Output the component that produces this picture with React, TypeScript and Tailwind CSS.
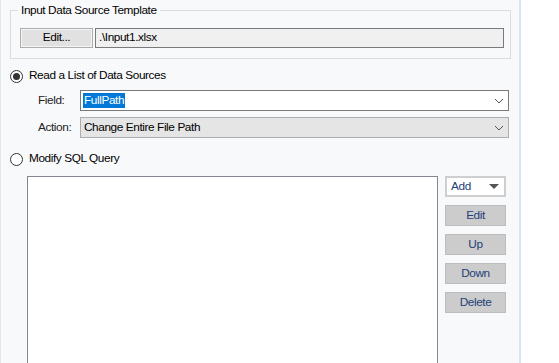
import React from "react";

const font = { fontFamily: '"Liberation Sans", Arial, sans-serif', letterSpacing: "-0.4px" };

function Radio({ checked, label }: { checked: boolean; label: string }) {
  return (
    <div className="flex items-center h-[14px]">
      <div className="w-[13px] h-[13px] rounded-full border border-[#333333] bg-white flex items-center justify-center">
        {checked && <div className="w-[7px] h-[7px] rounded-full bg-[#333333]" />}
      </div>
      <span className="ml-[6px] text-black leading-none">{label}</span>
    </div>
  );
}

function Chevron() {
  return (
    <svg width="10" height="6" viewBox="0 0 10 6" className="mr-[4px]">
      <path d="M1 1 L5 5 L9 1" fill="none" stroke="#555" strokeWidth="1" />
    </svg>
  );
}

function SideButton({ label }: { label: string }) {
  return (
    <div className="w-[61px] h-[21px] bg-[#cccccc] border border-[#bdbdbd] flex items-center justify-center text-[#1e3f78]">
      {label}
    </div>
  );
}

export default function App() {
  return (
    <div className="w-[559px] h-[363px] bg-white overflow-hidden flex text-[12px] [&_*]:text-[11.8px]" style={font}>
      <div className="w-[521px] h-full bg-[#f8f9fb] border-l border-[#e4e7ee] border-r-2 border-r-[#dce3f0] flex flex-col shrink-0">
        {/* Group box */}
        <div className="relative ml-[9px] mt-[10px] w-[501px] h-[49px] border border-[#dcdcdc]">
          <div className="absolute left-[7px] top-[-8px] px-[3px] bg-[#f8f9fb] leading-[14px] text-black">
            Input Data Source Template
          </div>
          <div className="flex mt-[17px] ml-[9px]">
            <div className="w-[73px] h-[20px] bg-[#e1e1e1] border border-[#adadad] flex items-center justify-center text-black shadow-[inset_0_0_0_1px_#f4f4f4]">
              Edit...
            </div>
            <div className="ml-[2px] w-[409px] h-[20px] bg-[#f0f0f0] border border-[#7a7a7a] flex items-center pl-[3px] text-black">
              .\Input1.xlsx
            </div>
          </div>
        </div>

        <div className="ml-[9px] mt-[10px]">
          <Radio checked label="Read a List of Data Sources" />
        </div>

        <div className="flex items-center mt-[7px] ml-[37px]">
          <span className="w-[42px] text-[#222]">Field:</span>
          <div className="w-[429px] h-[21px] bg-white border border-[#7a7a7a] flex items-center justify-between pl-[2px]">
            <span className="bg-[#0078d7] text-white leading-[15px] px-[1px]">FullPath</span>
            <Chevron />
          </div>
        </div>

        <div className="flex items-center mt-[6px] ml-[37px]">
          <span className="w-[42px] text-[#222]">Action:</span>
          <div className="w-[429px] h-[21px] bg-[#e5e5e5] border border-[#adadad] flex items-center justify-between pl-[3px]">
            <span className="text-black">Change Entire File Path</span>
            <Chevron />
          </div>
        </div>

        <div className="ml-[9px] mt-[14px]">
          <Radio checked={false} label="Modify SQL Query" />
        </div>

        <div className="flex mt-[10px] ml-[26px] flex-1 min-h-0">
          <div className="w-[411px] h-[200px] bg-white border border-[#828790]" />
          <div className="ml-[7px] flex flex-col gap-[8px]">
            <div className="w-[61px] h-[21px] bg-white border-2 border-[#cfcfcf] flex items-center justify-between pl-[4px] pr-[5px] text-[#1e3f78]">
              <span>Add</span>
              <svg width="10" height="6" viewBox="0 0 10 6">
                <path d="M0 0 L10 0 L5 5 Z" fill="#555" />
              </svg>
            </div>
            <SideButton label="Edit" />
            <SideButton label="Up" />
            <SideButton label="Down" />
            <SideButton label="Delete" />
          </div>
        </div>
      </div>
    </div>
  );
}
